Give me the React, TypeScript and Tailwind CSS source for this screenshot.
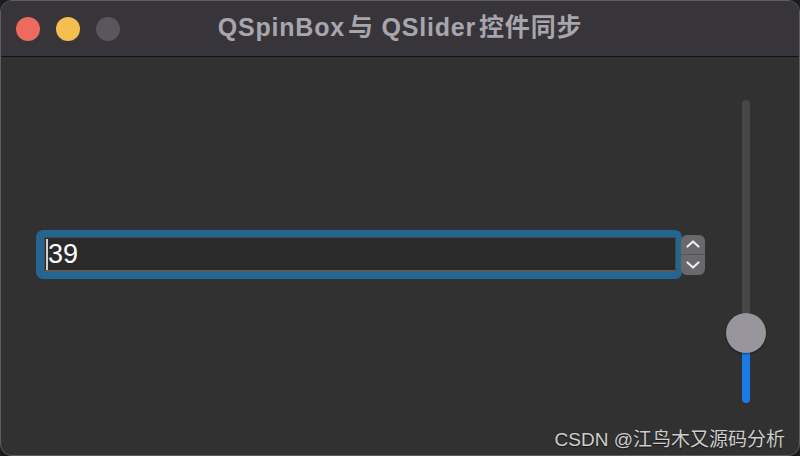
export default function App() {
  return (
    <div className="h-[456px] w-[800px] bg-[#1c1c1c]">
      <div className="relative flex h-full w-full flex-col overflow-hidden rounded-[12px] border border-[#5e5e5e] bg-[#313131] font-['Liberation_Sans','Noto_Sans_CJK_SC',sans-serif]">
        {/* title bar */}
        <div className="relative flex h-[56px] shrink-0 items-center border-b border-b-[#111] bg-[#37353a]">
          <div className="flex gap-[16px] pl-[15px]">
            <span className="h-[24px] w-[24px] rounded-full bg-[#ee6a5f]" />
            <span className="h-[24px] w-[24px] rounded-full bg-[#f5bf4f]" />
            <span className="h-[24px] w-[24px] rounded-full bg-[#59575d]" />
          </div>
          <div className="absolute inset-0 flex items-center justify-center pb-[1px] text-[25px] font-bold tracking-[0.8px] text-[#a8a5ac]">
            QSpinBox<span className="ml-[3px]">与</span>&nbsp;QSlider<span className="ml-[3px]">控件同步</span>
          </div>
        </div>

        {/* body */}
        <div className="flex flex-1 items-start pl-[35px]">
          <div className="mt-[173px] flex items-center">
            <div className="h-[49px] w-[646px] rounded-[7px] bg-[#24668f] pb-[7px] pl-[8px] pr-[6px] pt-[7px]">
              <div className="flex h-full items-center border border-[#474747] border-b-2 border-b-[#5a5a5a] bg-[#2a2a2a] pl-[1px]">
                <span className="h-[31px] w-[2px] bg-[#d0d0d0]" />
                <span className="text-[27px] leading-none text-white">39</span>
              </div>
            </div>
            <div className="-ml-[1px] flex h-[40px] w-[24px] flex-col overflow-hidden rounded-[6px] bg-[#69686b]">
              <div className="flex flex-1 items-center justify-center border-b border-b-[#555457]">
                <svg width="16" height="10" viewBox="0 0 16 10">
                  <polyline points="2.5,7.5 8,2.5 13.5,7.5" fill="none" stroke="#ececec" strokeWidth="2.2" strokeLinecap="round" strokeLinejoin="round" />
                </svg>
              </div>
              <div className="flex flex-1 items-center justify-center">
                <svg width="16" height="10" viewBox="0 0 16 10">
                  <polyline points="2.5,2.5 8,7.5 13.5,2.5" fill="none" stroke="#ececec" strokeWidth="2.2" strokeLinecap="round" strokeLinejoin="round" />
                </svg>
              </div>
            </div>
          </div>

          {/* vertical slider */}
          <div className="relative ml-[21px] mt-[43px] h-[303px] w-[40px]">
            <div className="absolute left-[16px] top-0 h-[240px] w-[8px] rounded-t-full bg-[#474747]" />
            <div className="absolute bottom-0 left-[16px] h-[70px] w-[8px] rounded-b-full bg-[#1a7be6]" />
            <div className="absolute left-0 top-[213px] h-[40px] w-[40px] rounded-full bg-[#98959c] shadow-[0_1px_2px_rgba(0,0,0,0.5)]" />
          </div>
        </div>

        <div className="absolute bottom-[6px] right-[14px] text-[19px] leading-none text-[#cdcdcd] [text-shadow:0_1px_1px_rgba(0,0,0,0.6)]">
          CSDN @江鸟木又源码分析
        </div>
      </div>
    </div>
  );
}
